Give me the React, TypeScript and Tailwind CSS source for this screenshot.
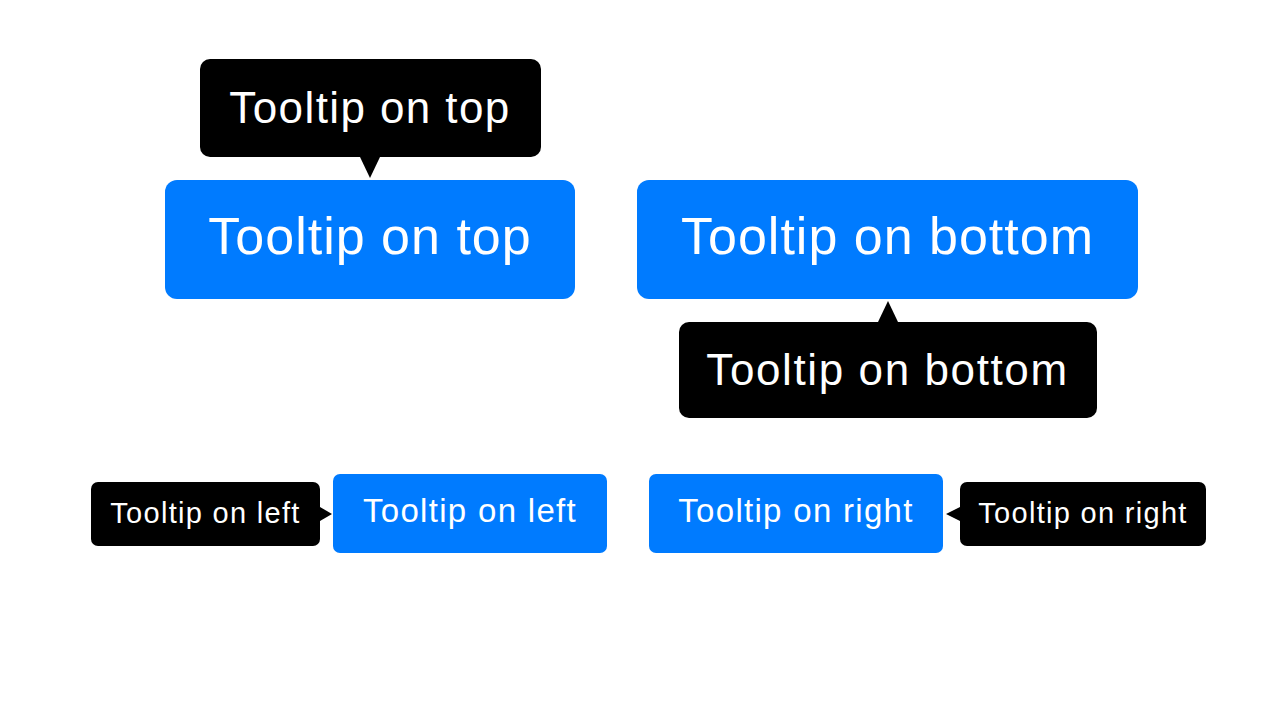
import React from "react";

const font = "font-['Liberation_Sans',Arial,sans-serif]";

const App: React.FC = () => {
  return (
    <div className={`w-[1280px] h-[720px] bg-white ${font} text-white overflow-hidden`}>
      {/* top row */}
      <div className="flex items-start pl-[165px] pt-[59px] gap-[62px]">
        <div className="flex flex-col items-center w-[410px]">
          <div className="w-[341px] h-[98px] bg-black rounded-[10px] flex items-center justify-center text-[44px] tracking-[1.4px] leading-none">
            Tooltip on top
          </div>
          <div className="h-[23px]">
            <div className="w-0 h-0 border-l-[10px] border-r-[10px] border-t-[21px] border-l-transparent border-r-transparent border-t-black" />
          </div>
          <button className="w-[410px] h-[119px] bg-[#007bff] rounded-[12px] flex items-center justify-center pb-[8px] text-[52px] tracking-[1px] leading-none">
            Tooltip on top
          </button>
        </div>

        <div className="flex flex-col items-center w-[501px] mt-[121px]">
          <button className="w-[501px] h-[119px] bg-[#007bff] rounded-[12px] flex items-center justify-center pb-[8px] text-[52px] tracking-[1px] leading-none">
            Tooltip on bottom
          </button>
          <div className="h-[23px] flex items-end">
            <div className="w-0 h-0 border-l-[10px] border-r-[10px] border-b-[21px] border-l-transparent border-r-transparent border-b-black" />
          </div>
          <div className="w-[418px] h-[96px] bg-black rounded-[10px] flex items-center justify-center text-[44px] tracking-[1.6px] leading-none">
            Tooltip on bottom
          </div>
        </div>
      </div>

      {/* bottom row */}
      <div className="flex items-center pl-[91px] mt-[56px]">
        <div className="w-[229px] h-[64px] bg-black rounded-[7px] flex items-center justify-center text-[29px] tracking-[1.3px] leading-none">
          Tooltip on left
        </div>
        <div className="w-[13px] flex items-center">
          <div className="w-0 h-0 border-t-[7px] border-b-[7px] border-l-[12px] border-t-transparent border-b-transparent border-l-black" />
        </div>
        <button className="w-[274px] h-[79px] bg-[#007bff] rounded-[7px] flex items-center justify-center pb-[6px] text-[33px] tracking-[1.3px] leading-none">
          Tooltip on left
        </button>

        <button className="ml-[42px] w-[294px] h-[79px] bg-[#007bff] rounded-[7px] flex items-center justify-center pb-[6px] text-[33px] tracking-[1.3px] leading-none">
          Tooltip on right
        </button>
        <div className="w-[17px] flex items-center justify-end">
          <div className="w-0 h-0 border-t-[7px] border-b-[7px] border-r-[14px] border-t-transparent border-b-transparent border-r-black" />
        </div>
        <div className="w-[246px] h-[64px] bg-black rounded-[7px] flex items-center justify-center text-[29px] tracking-[1.3px] leading-none">
          Tooltip on right
        </div>
      </div>
    </div>
  );
};

export default App;
